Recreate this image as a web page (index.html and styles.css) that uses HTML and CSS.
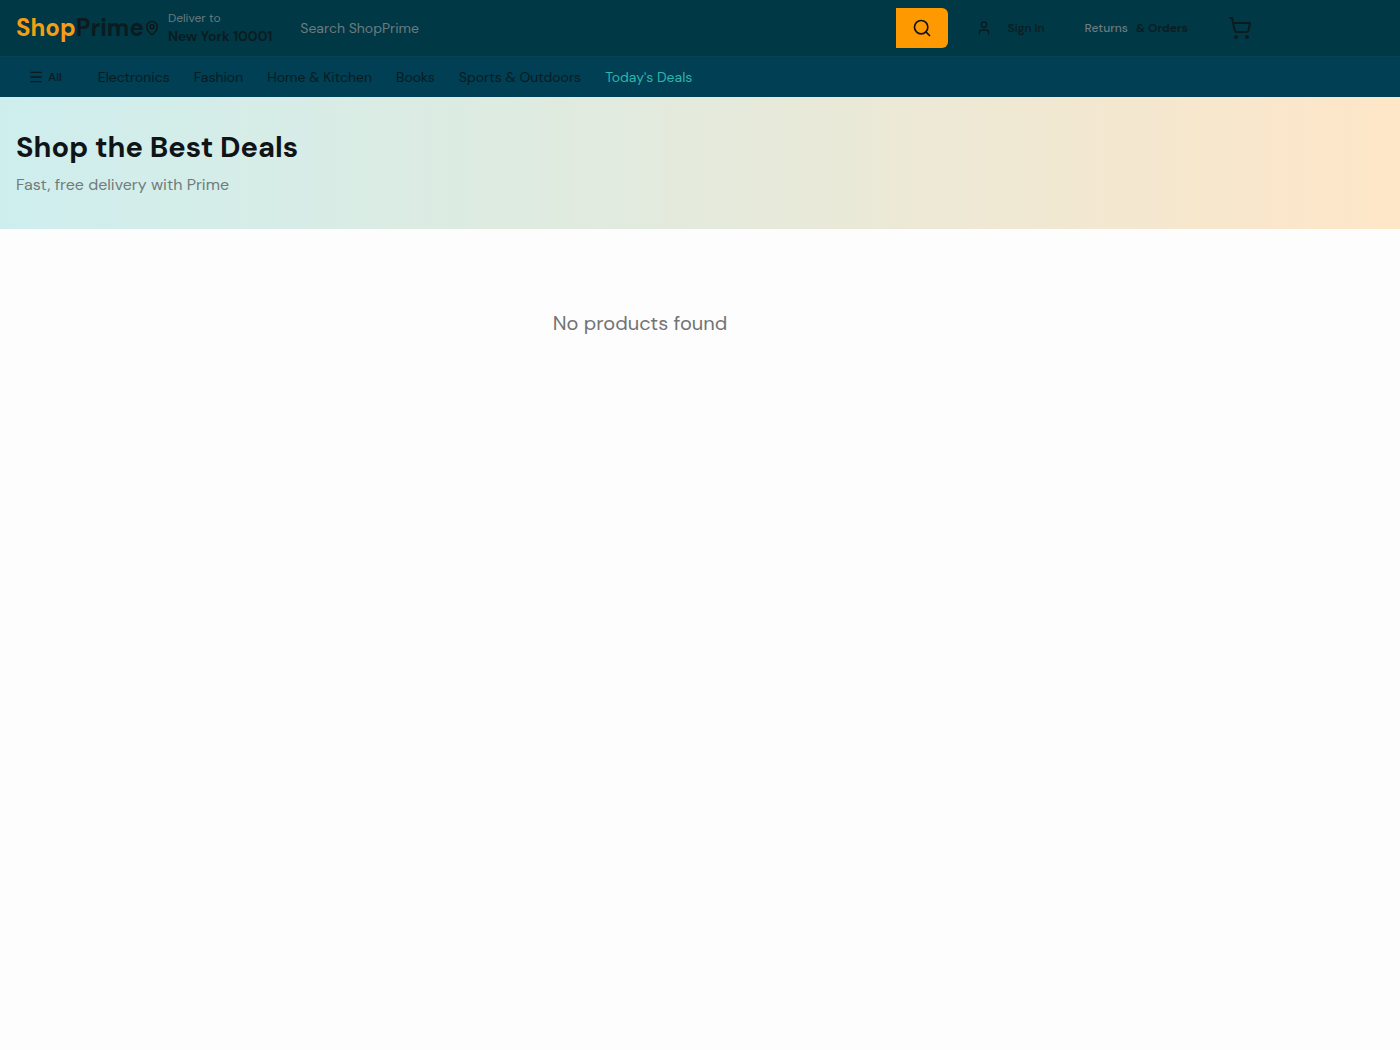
FILE: index.html
```html
<!DOCTYPE html>
<html lang="en">
<head>
    <meta charset="utf-8">
    <meta name="viewport" content="width=device-width, initial-scale=1">
    <title>ShopPrime</title>
    <link rel="stylesheet" href="styles.css">
</head>
<body>
    <header>
        <div class="top-bar container">
            <div class="brand">
                <a href="#" class="logo"><span>Shop</span>Prime</a>
                <div class="deliver">
                    <svg class="icon" viewBox="0 0 24 24" width="16" height="16"><path d="M20 10c0 4.993-5.539 10.193-7.399 11.799a1 1 0 0 1-1.202 0C9.539 20.193 4 14.993 4 10a8 8 0 0 1 16 0"/><circle cx="12" cy="10" r="3"/></svg>
                    <div>
                        <p class="deliver-label">Deliver to</p>
                        <p class="deliver-place">New York 10001</p>
                    </div>
                </div>
            </div>
            <form class="search">
                <input type="text" placeholder="Search ShopPrime" aria-label="Search ShopPrime">
                <button type="submit" aria-label="Search">
                    <svg class="icon" viewBox="0 0 24 24" width="20" height="20"><circle cx="11" cy="11" r="8"/><path d="m21 21-4.3-4.3"/></svg>
                </button>
            </form>
            <button class="action sign-in">
                <svg class="icon" viewBox="0 0 24 24" width="16" height="16"><path d="M19 21v-2a4 4 0 0 0-4-4H9a4 4 0 0 0-4 4v2"/><circle cx="12" cy="7" r="4"/></svg>
                Sign In
            </button>
            <button class="action orders"><span>Returns</span> <b>&amp; Orders</b></button>
            <button class="action" aria-label="Cart">
                <svg class="icon" viewBox="0 0 24 24" width="24" height="24"><circle cx="8" cy="21" r="1"/><circle cx="19" cy="21" r="1"/><path d="M2.05 2.05h2l2.66 12.42a2 2 0 0 0 2 1.58h9.78a2 2 0 0 0 1.95-1.57l1.65-7.43H5.12"/></svg>
            </button>
        </div>
        <nav>
            <div class="nav-links container">
                <button class="all">
                    <svg class="icon" viewBox="0 0 24 24" width="16" height="16"><path d="M4 5h16M4 12h16M4 19h16"/></svg>
                    All
                </button>
                <a href="#">Electronics</a>
                <a href="#">Fashion</a>
                <a href="#">Home &amp; Kitchen</a>
                <a href="#">Books</a>
                <a href="#">Sports &amp; Outdoors</a>
                <a href="#" class="deals">Today's Deals</a>
            </div>
        </nav>
    </header>

    <section class="hero">
        <div class="container">
            <h1>Shop the Best Deals</h1>
            <p>Fast, free delivery with Prime</p>
        </div>
    </section>

    <main class="container">
        <p class="empty">No products found</p>
    </main>
</body>
</html>
```
FILE: styles.css
```css
* {
    box-sizing: border-box;
}
body {
    margin: 0;
    font-family: "DM Sans", Inter, sans-serif;
    font-size: 16px;
    line-height: 24px;
    color: #101416;
    background-color: #fdfdfd;
}
h1, p {
    margin: 0;
}
a {
    color: inherit;
    text-decoration: none;
}
button, input {
    font: inherit;
    color: inherit;
    background: none;
    border: none;
    padding: 0;
}
button {
    cursor: pointer;
}
.container {
    width: 100%;
    max-width: 1280px;
    padding: 0 16px;
}
.icon {
    display: block;
    flex-shrink: 0;
    fill: none;
    stroke: currentColor;
    stroke-width: 2;
    stroke-linecap: round;
    stroke-linejoin: round;
}

/* header */
header {
    background-color: #003845;
}
.top-bar {
    display: flex;
    align-items: center;
    gap: 16px;
    height: 56px;
}
.brand, .deliver {
    display: flex;
    align-items: center;
}
.logo {
    font-size: 24px;
    font-weight: 700;
    line-height: 32px;
    color: #0b1b20;
}
.logo span {
    color: #f59e14;
}
.deliver {
    gap: 8px;
    white-space: nowrap;
}
.deliver-label {
    font-size: 12px;
    line-height: 16px;
    color: #6b7b80;
}
.deliver-place {
    font-size: 14px;
    font-weight: 600;
    line-height: 20px;
    color: #0b1b20;
}
.search {
    display: flex;
    flex: 1;
    height: 40px;
}
.search input {
    flex: 1;
    min-width: 0;
    padding: 0 12px;
    font-size: 14px;
}
.search input::placeholder {
    color: #6b7b80;
    opacity: 1;
}
.search button {
    padding: 0 16px;
    background-color: #ff9900;
    border-radius: 0 6px 6px 0;
}
.action {
    display: flex;
    align-items: center;
    padding: 0 12px;
    font-size: 12px;
    font-weight: 500;
    color: #0b1b20;
    white-space: nowrap;
}
.sign-in {
    gap: 16px;
}
.orders {
    gap: 8px;
}
.orders span {
    color: #6b7b80;
}
.orders b {
    font-weight: 600;
}

/* category links */
nav {
    background-color: #003f54;
    border-top: 1px solid #064454;
}
.nav-links {
    display: flex;
    align-items: center;
    gap: 24px;
    height: 40px;
    font-size: 14px;
    color: #0b1b20;
    white-space: nowrap;
}
.all {
    display: flex;
    align-items: center;
    gap: 4px;
    padding: 0 12px;
    font-size: 12px;
    font-weight: 500;
}
.deals {
    color: #2fb5ac;
}

/* hero */
.hero {
    padding: 32px 0;
    background: linear-gradient(to right, #ceeeee, #e4eadc 50%, #fee6c8);
}
.hero h1 {
    margin-bottom: 8px;
    font-size: 29px;
    font-weight: 700;
    line-height: 36px;
}
.hero p {
    color: #717b79;
}

.empty {
    padding: 80px 0;
    font-size: 20px;
    line-height: 28px;
    text-align: center;
    color: #737373;
}
```
